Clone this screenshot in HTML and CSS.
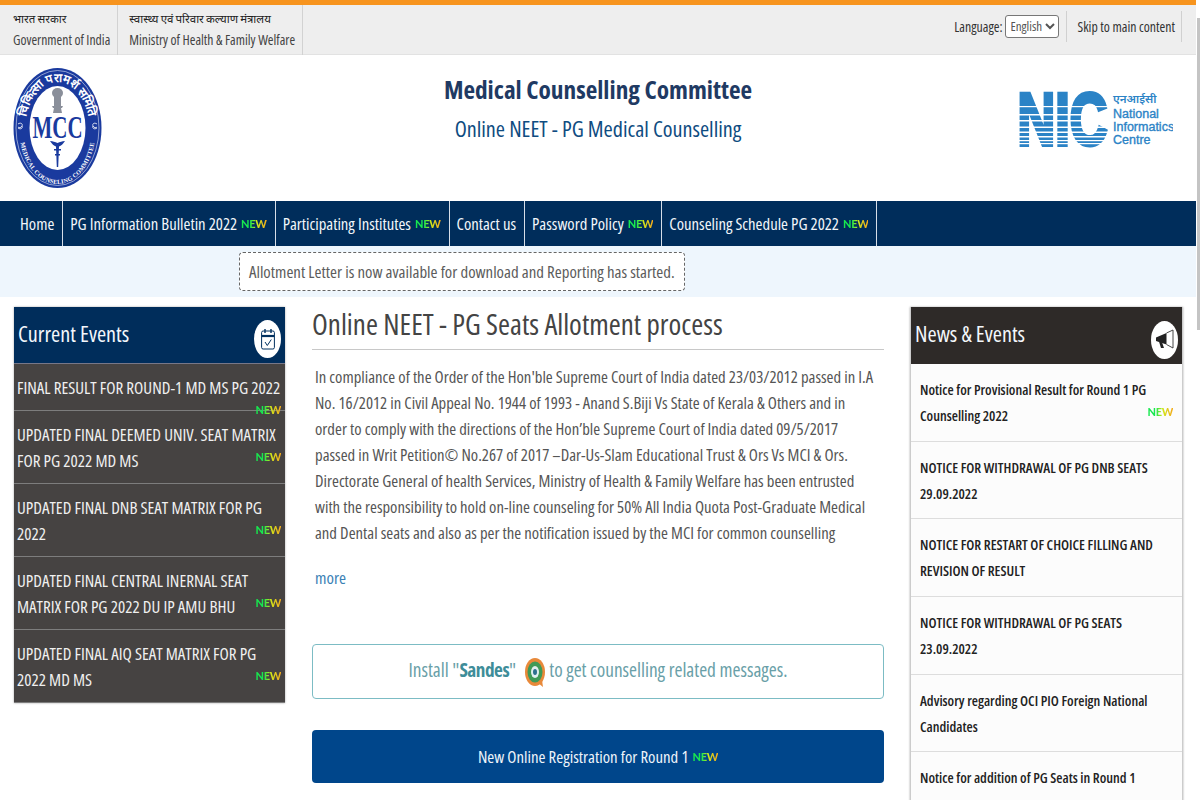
FILE: index.html
```html
<!DOCTYPE html>
<html lang="en">
<head>
<meta charset="utf-8">
<title>Medical Counselling Committee</title>
<link rel="stylesheet" href="styles.css">
</head>
<body>
<div class="scroll-track"><div class="scroll-thumb"></div></div>
<div class="page">
  <div class="gov-bar">
    <div class="gov-left">
      <a class="gov-cell first"><span class="hi">भारत सरकार</span><span>Government of India</span></a>
      <a class="gov-cell"><span class="hi">स्वास्थ्य एवं परिवार कल्याण मंत्रालय</span><span>Ministry of Health &amp; Family Welfare</span></a>
    </div>
    <div class="gov-right">
      <label class="lang">Language:</label>
      <select class="lang-select"><option>English</option></select>
      <a class="skip">Skip to main content</a>
    </div>
  </div>

  <header class="masthead">
    <svg class="mcc-logo" width="90" height="122" viewBox="0 0 90 122">
      <defs>
        <path id="arcTop" d="M12.500 60 A32 46 0 0 1 76.500 60"/>
        <path id="arcBot" d="M6.500 62 A38 54 0 0 0 82.500 62"/>
      </defs>
      <ellipse cx="44.500" cy="60" rx="44" ry="60" fill="#1a3a9e"/>
      <ellipse cx="44.500" cy="60" rx="41.500" ry="57.500" fill="none" stroke="#dfe6f5" stroke-width=".6"/>
      <ellipse cx="44.500" cy="60" rx="28" ry="42" fill="#fff"/>
      <text class="mcc-arc hi-arc"><textPath href="#arcTop" startOffset="50%" text-anchor="middle">चिकित्सा परामर्श समिति</textPath></text>
      <text class="mcc-arc"><textPath href="#arcBot" startOffset="50%" text-anchor="middle">MEDICAL COUNSELING COMMITTEE</textPath></text>
      <g fill="#8a8f9a">
        <ellipse cx="44.500" cy="25" rx="5.500" ry="5"/>
        <rect x="41" y="29" width="7" height="9"/>
        <path d="M39 38h11l-1 2h-1l1 5h-9l1-5h-1z"/>
      </g>
      <text x="44.500" y="70" class="mcc-name" textLength="50" lengthAdjust="spacingAndGlyphs">MCC</text>
      <g fill="#1a3a9e">
        <path d="M37 73c3 0 5 1 7.500 2 2.500-1 4.500-2 7.500-2-2 3-4 5-6 5.500l-.8 20.500h-1.400l-.8-20.500c-2-.5-4-2.500-6-5.500z"/>
        <rect x="41" y="81" width="7" height="1.500"/>
        <rect x="42" y="86" width="5" height="1.500"/>
      </g>
      <g fill="none" stroke="#fff" stroke-width=".8">
        <path d="M5 56c3-2 5 0 4 2s-3 2-4 1M5 60c3 2 5 0 4-2"/>
        <path d="M84 56c-3-2-5 0-4 2s3 2 4 1M84 60c-3 2-5 0-4-2"/>
      </g>
    </svg>
    <div class="site-title">
      <h1>Medical Counselling Committee</h1>
      <h2>Online NEET - PG Medical Counselling</h2>
    </div>
    <svg class="nic-logo" width="156" height="62" viewBox="0 0 156 62">
      <text x=".5" y="56.500" class="nic-mark" textLength="90" lengthAdjust="spacingAndGlyphs">NIC</text>
      <g fill="#fff">
        <rect y="18" width="93" height="1.200"/>
        <rect y="26" width="93" height="1.500"/>
        <rect y="32" width="93" height="1.500"/>
        <rect y="38.500" width="93" height="1.500"/>
        <rect y="43.500" width="93" height="1.500"/>
        <rect y="48" width="93" height="1.500"/>
        <rect y="52" width="93" height="1.200"/>
        <rect y="55" width="93" height="1.200"/>
      </g>
      <text x="96" y="15" class="nic-hi">एनआईसी</text>
      <text x="96" y="30" class="nic-txt">National</text>
      <text x="96" y="43" class="nic-txt">Informatics</text>
      <text x="96" y="56" class="nic-txt">Centre</text>
    </svg>
  </header>

  <nav class="main-nav">
    <a class="home">Home</a>
    <a>PG Information Bulletin 2022 <span class="new">NEW</span></a>
    <a>Participating Institutes <span class="new">NEW</span></a>
    <a>Contact us</a>
    <a>Password Policy <span class="new">NEW</span></a>
    <a>Counseling Schedule PG 2022 <span class="new">NEW</span></a>
  </nav>

  <div class="ticker"><div class="ticker-box">Allotment Letter is now available for download and Reporting has started.</div></div>

  <main class="columns">
    <aside class="panel events">
      <div class="panel-head">
        <span>Current Events</span>
        <span class="head-icon">
          <svg width="14" height="22" viewBox="0 0 14 22" fill="none" stroke="#00305f">
            <rect x=".6" y="3" width="12.800" height="18" rx="1.500" stroke-width="1"/>
            <path d="M.6 8h12.800" stroke-width="2.200"/>
            <path d="M4 1v4M10 1v4" stroke-width="1.400"/>
            <path d="M4 14l2.300 3.500 4-6" stroke-width="1"/>
          </svg>
        </span>
      </div>
      <a class="event">FINAL RESULT FOR ROUND-1 MD MS PG 2022<span class="new flag">NEW</span></a>
      <a class="event">UPDATED FINAL DEEMED UNIV. SEAT MATRIX FOR PG 2022 MD MS<span class="new flag">NEW</span></a>
      <a class="event">UPDATED FINAL DNB SEAT MATRIX FOR PG 2022<span class="new flag">NEW</span></a>
      <a class="event">UPDATED FINAL CENTRAL INERNAL SEAT MATRIX FOR PG 2022 DU IP AMU BHU<span class="new flag">NEW</span></a>
      <a class="event">UPDATED FINAL AIQ SEAT MATRIX FOR PG 2022 MD MS<span class="new flag">NEW</span></a>
    </aside>

    <section class="center">
      <h3 class="center-title">Online NEET - PG Seats Allotment process</h3>
      <p class="intro">In compliance of the Order of the Hon'ble Supreme Court of India dated 23/03/2012 passed in I.A<br>No. 16/2012 in Civil Appeal No. 1944 of 1993 - Anand S.Biji Vs State of Kerala &amp; Others and in<br>order to comply with the directions of the Hon’ble Supreme Court of India dated 09/5/2017<br>passed in Writ Petition© No.267 of 2017 –Dar-Us-Slam Educational Trust &amp; Ors Vs MCI &amp; Ors.<br>Directorate General of health Services, Ministry of Health &amp; Family Welfare has been entrusted<br>with the responsibility to hold on-line counseling for 50% All India Quota Post-Graduate Medical<br>and Dental seats and also as per the notification issued by the MCI for common counselling</p>
      <a class="more">more</a>
      <div class="sandes">Install "<b>Sandes</b>"<svg class="sandes-icon" width="22" height="30" viewBox="0 0 22 30">
          <ellipse cx="11" cy="14" rx="10" ry="14" fill="#e8893a"/>
          <path d="M14 25l5 4-1-7z" fill="#e8893a"/>
          <ellipse cx="11" cy="14" rx="7.500" ry="10.500" fill="#3f9a57"/>
          <ellipse cx="11" cy="14" rx="4" ry="6" fill="#dfeef0"/>
          <ellipse cx="11" cy="14" rx="2" ry="3" fill="#2c6f8f"/>
        </svg>to get counselling related messages.</div>
      <a class="register">New Online Registration for Round 1 <span class="new">NEW</span></a>
    </section>

    <aside class="panel news">
      <div class="panel-head dark">
        <span>News &amp; Events</span>
        <span class="head-icon">
          <svg width="19" height="21" viewBox="0 0 19 21">
            <path d="M1 8.500L11.500 4v11.500L1 12z" fill="#222"/>
            <path d="M4 12.500l2 6.500h3l-2-5.800z" fill="#222"/>
            <path d="M11.500 4L18 1v18l-6.500-3.500" fill="none" stroke="#333" stroke-width=".9"/>
          </svg>
        </span>
      </div>
      <a class="notice">Notice for Provisional Result for Round 1 PG Counselling 2022<span class="new flag">NEW</span></a>
      <a class="notice">NOTICE FOR WITHDRAWAL OF PG DNB SEATS 29.09.2022</a>
      <a class="notice">NOTICE FOR RESTART OF CHOICE FILLING AND REVISION OF RESULT</a>
      <a class="notice">NOTICE FOR WITHDRAWAL OF PG SEATS 23.09.2022</a>
      <a class="notice">Advisory regarding OCI PIO Foreign National Candidates</a>
      <a class="notice">Notice for addition of PG Seats in Round 1</a>
    </aside>
  </main>
</div>
</body>
</html>
```

FILE: styles.css
```css
* { box-sizing: border-box; }
html, body { margin: 0; height: 800px; overflow: hidden; background: #fff; }
body {
  font-family: "Open Sans", "Noto Sans", "Liberation Sans", sans-serif;
  font-stretch: 75%;
  color: #444;
}
.page { width: 1196px; height: 800px; overflow: hidden; border-top: 5px solid #f7941e; }
.scroll-track { position: absolute; top: 0; right: 0; width: 4px; height: 800px; background: #fff; }
.scroll-thumb { position: absolute; top: 18px; right: 0; width: 3px; height: 312px; background: #c4c4c4; }
a { color: inherit; text-decoration: none; }
h1, h2, h3, p { margin: 0; font-weight: normal; }

.gov-bar { height: 50px; background: #eeeeee; display: flex; justify-content: space-between; border-bottom: 1px solid #e2e2e2; }
.gov-left { display: flex; }
.gov-cell { display: flex; flex-direction: column; gap: 4px; justify-content: center; padding: 0 7px 3px 11px; font-size: 13.700px; color: #444; border-right: 1px solid #d2d2d2; height: 50px; }
.gov-cell.first { padding-left: 13px; }
.gov-cell .hi { color: #222; font-size: 11.500px; line-height: 17px; }
.gov-cell span { line-height: 17px; white-space: nowrap; }
.gov-right { display: flex; align-items: center; font-size: 13.800px; color: #333; padding: 0 14px 7px 0; }
.lang { margin-right: 2px; }
.lang-select { width: 54px; height: 23px; font: inherit; font-size: 13px; color: #555; background: #fff; border: 1px solid #777; border-radius: 3px; padding: 0 0 0 1px; }
.skip { margin-left: 7px; padding: 4px 6px 4px 11px; border-left: 1px solid #d0d0d0; border-right: 1px solid #d0d0d0; line-height: 23px; }

.masthead { height: 146px; display: grid; grid-template-columns: 300px 1fr 300px; align-items: center; padding: 0 23px 0 13px; background: #fff; }
.mcc-logo { margin-top: 2px; }
.site-title { text-align: center; padding-bottom: 39px; padding-left: 10px; }
.site-title h1 { font-size: 25.300px; font-weight: 700; color: #1f3a63; line-height: 38px; }
.site-title h2 { font-size: 22.200px; color: #0f4c81; line-height: 38px; margin-top: 2px; }
.nic-logo { justify-self: end; margin-top: -19px; }
.mcc-name { font-family: "Liberation Serif", serif; font-weight: 700; font-size: 32px; fill: #1a3a9e; text-anchor: middle; font-stretch: normal; }
.mcc-arc { font-family: "Liberation Serif", serif; font-weight: 700; font-size: 6.200px; fill: #fff; letter-spacing: .2px; }
.hi-arc { font-size: 12px; letter-spacing: 0; }
.nic-mark { font-family: "Liberation Sans", sans-serif; font-weight: 700; font-size: 75px; fill: #2b83c6; stroke: #2b83c6; stroke-width: 4; font-stretch: normal; }
.nic-hi { font-size: 11.500px; fill: #2b83c6; font-weight: 600; }
.nic-txt { font-family: "Liberation Sans", sans-serif; font-size: 12.500px; fill: #2b83c6; stroke: #2b83c6; stroke-width: .35; font-stretch: normal; }

.main-nav { height: 45px; background: #002d5b; display: flex; width: 1196px; color: #f2f6fa; font-size: 16.700px; }
.main-nav a { display: flex; align-items: center; gap: 4px; padding: 0 8px 0 7px; border-right: 1px solid #d6dee8; white-space: nowrap; }
.main-nav a.home { padding-left: 20px; }
.new {
  display: inline-block;
  font-family: "Lato", "Liberation Sans", sans-serif;
  font-stretch: normal;
  font-size: 11px;
  font-weight: 900;
  line-height: 12px;
  letter-spacing: -0.300px;
  background: linear-gradient(90deg, #17e84f 0 35%, #cfe81a 60%, #f4a91c 100%);
  -webkit-background-clip: text;
  background-clip: text;
  color: transparent;
}
.new.flag { float: right; font-size: 11px; line-height: 15px; margin-top: 1px; }

.ticker { height: 51px; background: #eef6fd; display: flex; padding: 6px 0 0 239px; }
.ticker-box { height: 39px; line-height: 37px; width: 446px; padding-left: 9px; background: #fff; border: 1px dashed #666; border-radius: 4px; font-size: 16.850px; color: #5c5c5c; white-space: nowrap; }

.columns { display: grid; grid-template-columns: 271px 572px 272px; column-gap: 27px; padding: 10px 0 0 14px; align-items: start; }
.panel { box-shadow: 0 0 2px rgba(0,0,0,.35); }
.panel-head { height: 57px; background: #002d5b; color: #f3f7fb; font-size: 22.200px; display: flex; align-items: center; justify-content: space-between; padding: 0 4px 0 4px; border-bottom: 1px solid #778; }
.panel-head.dark { background: #2e2a28; border-bottom: 0; }
.panel-head > span:first-child { margin-top: -4px; }
.head-icon { width: 27px; height: 38px; border-radius: 50%; background: #fff; display: flex; align-items: center; justify-content: center; margin-top: 8px; }
.event { display: block; background: #464342; color: #f0f0f0; font-size: 17px; line-height: 26px; padding: 11px 4px 9px 3px; border-bottom: 1px solid #7d7d7d; }
.news { border: 1px solid #ccc; border-top: 0; background: #fcfcfc; margin-left: -1px; }
.notice { display: block; color: #222; font-size: 14.200px; font-weight: 600; line-height: 26px; padding: 13px 9px 11.700px 9px; border-bottom: 1px solid #ddd; }
.notice .new.flag { margin-top: 1px; }

.center-title { font-size: 29px; color: #444; height: 43px; line-height: 34px; border-bottom: 1px solid #c8c8c8; white-space: nowrap; }
.intro { margin-top: 14px; padding-left: 3px; font-size: 16.700px; line-height: 26px; color: #555; white-space: nowrap; }
.more { display: block; margin-top: 19px; padding-left: 3px; font-size: 17px; line-height: 26px; color: #3a7fb5; }
.sandes { margin-top: 53px; height: 55px; line-height: 50px; text-align: center; border: 1px solid #7cbcc4; border-radius: 4px; font-size: 19.300px; color: #6a9fa8; background: #fff; white-space: nowrap; }
.sandes b { color: #3e8d99; font-weight: 700; letter-spacing: -.5px; }
.sandes-icon { vertical-align: middle; margin: 3px 3px 0 8px; }
.register { margin-top: 31px; height: 53px; display: flex; align-items: center; justify-content: center; gap: 4px; background: #00468b; color: #eef4fa; border-radius: 4px; font-size: 16.800px; }
```
